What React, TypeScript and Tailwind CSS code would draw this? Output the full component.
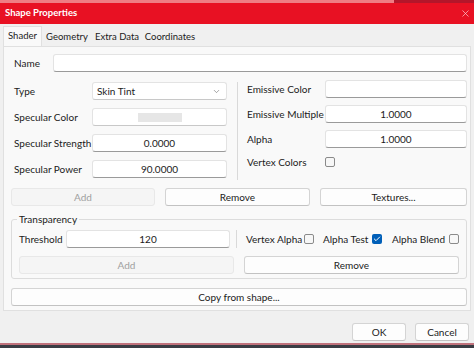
import { X, ChevronDown, Check } from "lucide-react"

const font = { fontFamily: 'Lato, "Noto Sans", sans-serif' }

function Field({ value, className = "" }: { value?: string; className?: string }) {
  return (
    <div
      className={`h-[18px] bg-white border border-[#e3e3e3] border-b-[#9a9a9a] rounded-[3px] flex items-center justify-center text-[10px] text-[#1b1b1b] ${className}`}
    >
      {value}
    </div>
  )
}

function Btn({ label, disabled = false, className = "" }: { label: string; disabled?: boolean; className?: string }) {
  return (
    <div
      className={`h-[18px] rounded-[3px] border flex items-center justify-center text-[10px] whitespace-nowrap ${
        disabled ? "bg-[#f5f5f5] border-[#e8e8e8] text-[#a0a0a0]" : "bg-[#fdfdfd] border-[#d4d4d4] border-b-[#c2c2c2] text-[#1b1b1b]"
      } ${className}`}
    >
      {label}
    </div>
  )
}

function Box({ checked = false }: { checked?: boolean }) {
  return checked ? (
    <div className="w-[10px] h-[10px] shrink-0 rounded-[2px] bg-[#005fb8] flex items-center justify-center">
      <Check className="w-[8px] h-[8px] text-white" strokeWidth={3} />
    </div>
  ) : (
    <div className="w-[10px] h-[10px] shrink-0 rounded-[2px] border border-[#8a8a8a] bg-[#f7f7f7]" />
  )
}

export default function App() {
  return (
    <div className="w-[474px] h-[348px] flex flex-col overflow-hidden bg-[#f0f0f0] whitespace-nowrap" style={font}>
      <div className="h-[3px] flex">
        <div className="flex-1 bg-[#ef7d84]" />
        <div className="w-[80px] bg-[#b3162a]" />
      </div>
      <div className="h-[21px] bg-[#e81123] flex items-center justify-between pl-[5px] pr-[3px]">
        <span className="text-[9.5px] font-bold text-white">Shape Properties</span>
        <X className="w-[11px] h-[11px] text-[#fbd0d3]" strokeWidth={1.5} />
      </div>

      <div className="flex-1 flex flex-col px-[3px]">
        <div className="h-[22px] flex items-end text-[9.5px] text-[#1b1b1b]">
          <div className="h-[20px] w-[39px] bg-[#f9f9f9] border border-b-0 border-[#e0e0e0] flex items-center justify-center">Shader</div>
          <div className="h-[18px] w-[50px] flex items-center justify-center">Geometry</div>
          <div className="h-[18px] w-[50px] flex items-center justify-center">Extra Data</div>
          <div className="h-[18px] w-[56px] flex items-center justify-center">Coordinates</div>
        </div>

        <div className="h-[265px] bg-[#f9f9f9] border border-[#e0e0e0] pl-[7px] pr-[3px] pt-[7px] text-[10px] text-[#1b1b1b] flex flex-col">
          <div className="flex items-center h-[18px]">
            <span className="w-[42px] pl-[3px]">Name</span>
            <Field className="flex-1" />
          </div>

          <div className="flex mt-[10px]">
            <div className="w-[216px] flex flex-col gap-[8px]">
              <div className="flex items-center">
                <span className="w-[81px] pl-[3px]">Type</span>
                <div className="flex-1 h-[18px] bg-white border border-[#e3e3e3] border-b-[#c8c8c8] rounded-[3px] flex items-center justify-between pl-[4px] pr-[5px]">
                  <span>Skin Tint</span>
                  <ChevronDown className="w-[9px] h-[9px] text-[#606060]" strokeWidth={1.5} />
                </div>
              </div>
              <div className="flex items-center">
                <span className="w-[81px] pl-[3px]">Specular Color</span>
                <div className="flex-1 h-[18px] bg-white border border-[#e3e3e3] border-b-[#c8c8c8] rounded-[3px] flex items-center justify-center">
                  <div className="w-[44px] h-[9px] bg-[#e6e6e6]" />
                </div>
              </div>
              <div className="flex items-center">
                <span className="w-[81px] pl-[3px]">Specular Strength</span>
                <Field className="flex-1" value="0.0000" />
              </div>
              <div className="flex items-center">
                <span className="w-[81px] pl-[3px]">Specular Power</span>
                <Field className="flex-1" value="90.0000" />
              </div>
            </div>

            <div className="w-[1px] bg-[#d9d9d9] ml-[10px] mr-[9px] h-[98px]" />

            <div className="flex-1 flex flex-col gap-[7px] -mt-[2px]">
              <div className="flex items-center">
                <span className="w-[78px]">Emissive Color</span>
                <Field className="flex-1" />
              </div>
              <div className="flex items-center">
                <span className="w-[78px]">Emissive Multiple</span>
                <Field className="flex-1" value="1.0000" />
              </div>
              <div className="flex items-center">
                <span className="w-[78px]">Alpha</span>
                <Field className="flex-1" value="1.0000" />
              </div>
              <div className="flex items-center h-[14px]">
                <span className="w-[78px]">Vertex Colors</span>
                <Box />
              </div>
            </div>
          </div>

          <div className="flex gap-[10px] mt-[8px]">
            <Btn label="Add" disabled className="w-[144px]" />
            <Btn label="Remove" className="w-[145px]" />
            <Btn label="Textures..." className="flex-1" />
          </div>

          <div className="relative mt-[13px] h-[60px] border border-[#dcdcdc] rounded-[3px] px-[7px] pt-[10px] flex flex-col">
            <span className="absolute -top-[7px] left-[5px] px-[2px] bg-[#f9f9f9] leading-[12px]">Transparency</span>
            <div className="flex items-center">
              <div className="w-[220px] flex items-center">
                <span className="w-[47px]">Threshold</span>
                <Field className="w-[164px]" value="120" />
              </div>
              <div className="w-[1px] h-[18px] bg-[#d9d9d9]" />
              <div className="flex items-center pl-[9px]">
                <span className="w-[58px]">Vertex Alpha</span>
                <Box />
                <span className="ml-[9px] w-[49px]">Alpha Test</span>
                <Box checked />
                <span className="ml-[10px] w-[57px]">Alpha Blend</span>
                <Box />
              </div>
            </div>
            <div className="flex gap-[10px] mt-[8px]">
              <Btn label="Add" disabled className="w-[215px] h-[16px]" />
              <Btn label="Remove" className="w-[215px] h-[16px]" />
            </div>
          </div>

          <Btn label="Copy from shape..." className="mt-[9px] h-[17px]" />
        </div>

        <div className="flex justify-end gap-[9px] mt-[12px] pr-[2px]">
          <Btn label="OK" className="w-[54px] h-[18px]" />
          <Btn label="Cancel" className="w-[54px] h-[18px]" />
        </div>
      </div>

      <div className="h-[2px] bg-[#c0727c]" />
      <div className="h-[3px] bg-[#3a3d44]" />
    </div>
  )
}
